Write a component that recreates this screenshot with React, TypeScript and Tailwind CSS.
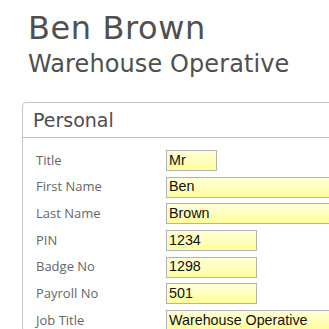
import React from 'react';

interface Field {
  label: string;
  value: string;
  size: 'sm' | 'md' | 'lg';
}

const FIELDS: Field[] = [
  { label: 'Title', value: 'Mr', size: 'sm' },
  { label: 'First Name', value: 'Ben', size: 'lg' },
  { label: 'Last Name', value: 'Brown', size: 'lg' },
  { label: 'PIN', value: '1234', size: 'md' },
  { label: 'Badge No', value: '1298', size: 'md' },
  { label: 'Payroll No', value: '501', size: 'md' },
  { label: 'Job Title', value: 'Warehouse Operative', size: 'lg' },
];

const WIDTHS = {
  sm: 'w-[51px]',
  md: 'w-[91px]',
  lg: 'w-[240px]',
};

export default function App() {
  return (
    <div className="w-[329px] h-[329px] overflow-hidden bg-white">
      {/* Header */}
      <div className="pl-[28px] pt-[9px] font-['DejaVu_Sans',sans-serif] text-[#505050]">
        <h1 className="text-[32px] leading-[38px] tracking-[0.6px] whitespace-nowrap">Ben Brown</h1>
        <h2 className="mt-[3px] text-[24px] leading-[28px] tracking-[0.1px] whitespace-nowrap">Warehouse Operative</h2>
      </div>

      {/* Personal panel */}
      <div className="mt-[24px] ml-[22px] w-[420px] border border-[#c6c6c6] rounded-[4px] bg-white">
        <div className="h-[35px] border-b border-[#bdbdbd] pl-[10px] pt-[5px]">
          <h3 className="font-['DejaVu_Sans',sans-serif] text-[19px] leading-[24px] text-[#4d4d4d]">Personal</h3>
        </div>

        <div className="pt-[12px] flex flex-col gap-[5.67px]">
          {FIELDS.map((f) => (
            <div key={f.label} className="flex items-center h-[21px]">
              <label className="w-[143px] pl-[13px] font-['Open_Sans',sans-serif] text-[13px] text-[#666666] whitespace-nowrap">
                {f.label}
              </label>
              <div
                className={`${WIDTHS[f.size]} h-[21px] border border-[#b3b3b3] bg-linear-to-b from-[#ffffd8] to-[#ffff9c] px-[2px] flex items-center font-['Liberation_Sans',Arial,sans-serif] text-[14.3px] text-[#111111] whitespace-nowrap overflow-hidden`}
              >
                {f.value}
              </div>
            </div>
          ))}
        </div>
      </div>
    </div>
  );
}
